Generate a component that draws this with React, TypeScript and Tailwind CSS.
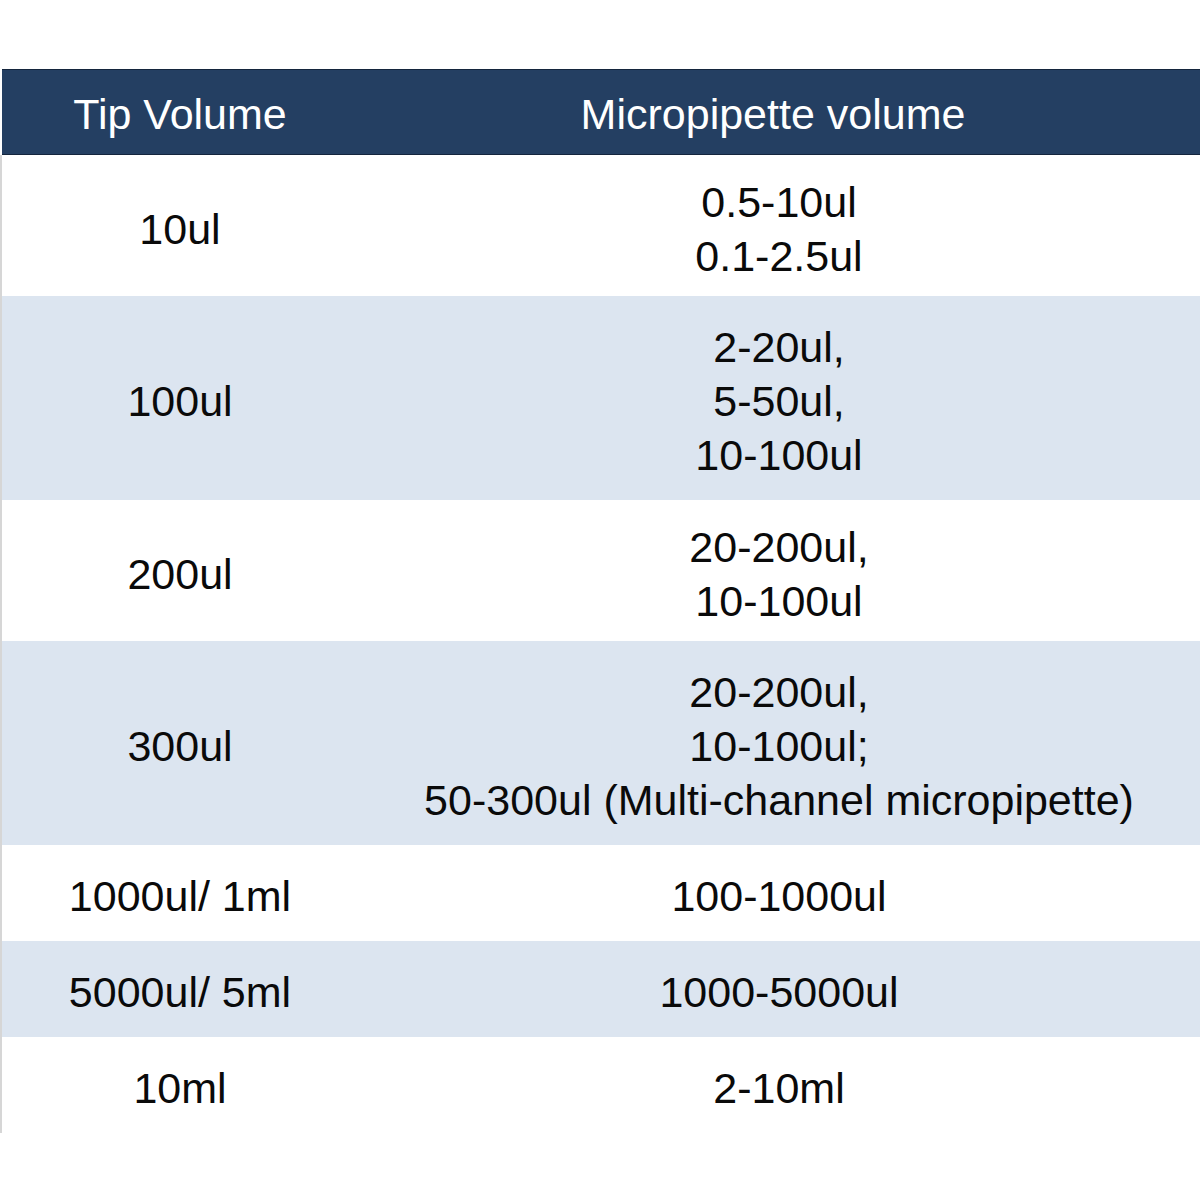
const rows: { tip: string; pipette: string[]; h: string; shaded: boolean }[] = [
  { tip: "10ul", pipette: ["0.5-10ul", "0.1-2.5ul"], h: "h-[141px]", shaded: false },
  { tip: "100ul", pipette: ["2-20ul,", "5-50ul,", "10-100ul"], h: "h-[204px]", shaded: true },
  { tip: "200ul", pipette: ["20-200ul,", "10-100ul"], h: "h-[141px]", shaded: false },
  {
    tip: "300ul",
    pipette: ["20-200ul,", "10-100ul;", "50-300ul (Multi-channel micropipette)"],
    h: "h-[204px]",
    shaded: true,
  },
  { tip: "1000ul/ 1ml", pipette: ["100-1000ul"], h: "h-[96px]", shaded: false },
  { tip: "5000ul/ 5ml", pipette: ["1000-5000ul"], h: "h-[96px]", shaded: true },
  { tip: "10ml", pipette: ["2-10ml"], h: "h-[96px]", shaded: false },
];

export default function App() {
  return (
    <div
      className="w-[1200px] h-[1200px] bg-white pt-[69px] text-[43px] leading-[54px]"
      style={{ fontFamily: '"Liberation Sans", Arial, sans-serif' }}
    >
      {/* header */}
      <div className="ml-[2px] h-[86px] pt-[4px] grid grid-cols-[356px_1fr] items-center bg-[#243f62] border-y border-[#14253d] text-white">
        <div className="text-center">Tip Volume</div>
        <div className="text-center pr-[12px]">Micropipette volume</div>
      </div>

      {/* body */}
      <div className="border-l-2 border-[#d6d6d6]">
        {rows.map((r) => (
          <div
            key={r.tip}
            className={`${r.h} pt-[6px] grid grid-cols-[356px_1fr] items-center text-[#0a0a0a] ${
              r.shaded ? "bg-[#dce5f0]" : "bg-white"
            }`}
          >
            <div className="text-center">{r.tip}</div>
            <div className="flex flex-col items-center">
              {r.pipette.map((p) => (
                <div key={p} className="whitespace-nowrap">
                  {p}
                </div>
              ))}
            </div>
          </div>
        ))}
      </div>
    </div>
  );
}
